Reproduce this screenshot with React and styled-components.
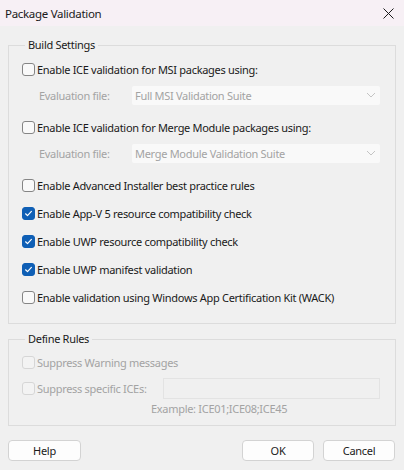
import React from 'react';
import styled, { createGlobalStyle } from 'styled-components';

const GlobalStyle = createGlobalStyle`
  html, body {
    margin: 0;
    padding: 0;
    background: #f0f0f0;
  }
  body {
    font-family: "Segoe UI", "Noto Sans", sans-serif;
    font-size: 11px;
    letter-spacing: -0.3px;
    color: #1a1a1a;
  }
`;

const Window = styled.div`
  width: 404px;
  height: 470px;
  display: flex;
  flex-direction: column;
  background: #f0f0f0;
  overflow: hidden;
`;

const TitleBar = styled.div`
  height: 26px;
  display: flex;
  align-items: center;
  justify-content: space-between;
  padding: 0 5px;
  background: #f7f0f5;
`;

const Title = styled.span`
  font-size: 11.5px;
  color: #1a1a1a;
`;

const CloseBtn = styled.div`
  width: 20px;
  height: 20px;
  display: flex;
  align-items: center;
  justify-content: center;
  margin-right: 1px;
`;

const Group = styled.fieldset`
  margin: ${p => p.$top}px 8px 0 8px;
  padding: 2px 15px ${p => p.$bottom}px 13px;
  border: 1px solid #dcdcdc;
  border-radius: 0;
  min-width: 0;
`;

const Legend = styled.legend`
  padding: 0 3px;
  margin-left: 3px;
  line-height: 16px;
  color: #1a1a1a;
`;

const CheckRow = styled.label`
  height: ${p => p.$h || 28}px;
  display: flex;
  align-items: center;
  gap: 2px;
  white-space: nowrap;
  color: ${p => (p.$disabled ? '#a3a3a3' : '#1a1a1a')};
`;

const Box = styled.span`
  width: 13px;
  height: 13px;
  box-sizing: border-box;
  border-radius: 3px;
  flex-shrink: 0;
  display: flex;
  align-items: center;
  justify-content: center;
  background: ${p => (p.$checked ? '#0f5fb5' : p.$disabled ? '#f3f3f3' : '#f9f9f9')};
  border: 1px solid ${p => (p.$checked ? '#0f5fb5' : p.$disabled ? '#d6d6d6' : '#858585')};
`;

const SelectRow = styled.div`
  height: 24px;
  display: flex;
  align-items: center;
  padding-left: 17px;
  margin-bottom: 6px;
  white-space: nowrap;
`;

const FieldLabel = styled.span`
  width: 93px;
  color: #a3a3a3;
`;

const Select = styled.div`
  flex: 1;
  height: 19px;
  display: flex;
  align-items: center;
  justify-content: space-between;
  padding: 0 4px 0 3px;
  background: #f9f9f9;
  border-radius: 2px;
  color: #a3a3a3;
`;

const IceRow = styled.div`
  height: 26px;
  display: flex;
  align-items: center;
`;

const IceInput = styled.div`
  margin-left: auto;
  width: 217px;
  height: 21px;
  box-sizing: border-box;
  border: 1px solid #e3e3e3;
  background: #f0f0f0;
`;

const Example = styled.div`
  height: 16px;
  line-height: 16px;
  padding-left: 129px;
  color: #a3a3a3;
`;

const Footer = styled.div`
  display: flex;
  align-items: center;
  gap: 9px;
  padding: 14px 9px 0 8px;
`;

const Button = styled.button`
  width: ${p => p.$w || 72}px;
  height: 21px;
  margin-right: ${p => (p.$push ? 'auto' : '0')};
  box-sizing: border-box;
  border: 1px solid #d3d3d3;
  border-radius: 4px;
  background: #fdfdfd;
  font-family: "Segoe UI", "Noto Sans", sans-serif;
  font-size: 11px;
  letter-spacing: -0.3px;
  color: #1a1a1a;
  padding: 0;
`;

const Check = () => (
  <svg width="9" height="9" viewBox="0 0 9 9">
    <path d="M1.6 4.8 L3.5 6.6 L7.4 2.4" fill="none" stroke="#fff" strokeWidth="1.2" strokeLinecap="round" strokeLinejoin="round" />
  </svg>
);

const Chevron = () => (
  <svg width="10" height="6" viewBox="0 0 10 6">
    <path d="M1 1 L5 5 L9 1" fill="none" stroke="#c4c4c4" strokeWidth="1" />
  </svg>
);

const CheckItem = ({ checked, disabled, children, h }) => (
  <CheckRow $disabled={disabled} $h={h}>
    <Box $checked={checked} $disabled={disabled}>{checked && <Check />}</Box>
    <span>{children}</span>
  </CheckRow>
);

export default function App() {
  return (
    <Window>
      <GlobalStyle />
      <TitleBar>
        <Title>Package Validation</Title>
        <CloseBtn>
          <svg width="11" height="11" viewBox="0 0 11 11">
            <path d="M0.5 0.5 L10.5 10.5 M10.5 0.5 L0.5 10.5" stroke="#1a1a1a" strokeWidth="1" />
          </svg>
        </CloseBtn>
      </TitleBar>

      <Group $top={11} $bottom={12}>
        <Legend>Build Settings</Legend>
        <CheckItem>Enable ICE validation for MSI packages using:</CheckItem>
        <SelectRow>
          <FieldLabel>Evaluation file:</FieldLabel>
          <Select>Full MSI Validation Suite<Chevron /></Select>
        </SelectRow>
        <CheckItem>Enable ICE validation for Merge Module packages using:</CheckItem>
        <SelectRow>
          <FieldLabel>Evaluation file:</FieldLabel>
          <Select>Merge Module Validation Suite<Chevron /></Select>
        </SelectRow>
        <CheckItem>Enable Advanced Installer best practice rules</CheckItem>
        <CheckItem checked>Enable App-V 5 resource compatibility check</CheckItem>
        <CheckItem checked>Enable UWP resource compatibility check</CheckItem>
        <CheckItem checked>Enable UWP manifest validation</CheckItem>
        <CheckItem>Enable validation using Windows App Certification Kit (WACK)</CheckItem>
      </Group>

      <Group $top={7} $bottom={8}>
        <Legend>Define Rules</Legend>
        <CheckItem disabled h={26}>Suppress Warning messages</CheckItem>
        <IceRow>
          <CheckItem disabled h={26}>Suppress specific ICEs:</CheckItem>
          <IceInput />
        </IceRow>
        <Example>Example: ICE01;ICE08;ICE45</Example>
      </Group>

      <Footer>
        <Button $w={73} $push>Help</Button>
        <Button>OK</Button>
        <Button>Cancel</Button>
      </Footer>
    </Window>
  );
}
